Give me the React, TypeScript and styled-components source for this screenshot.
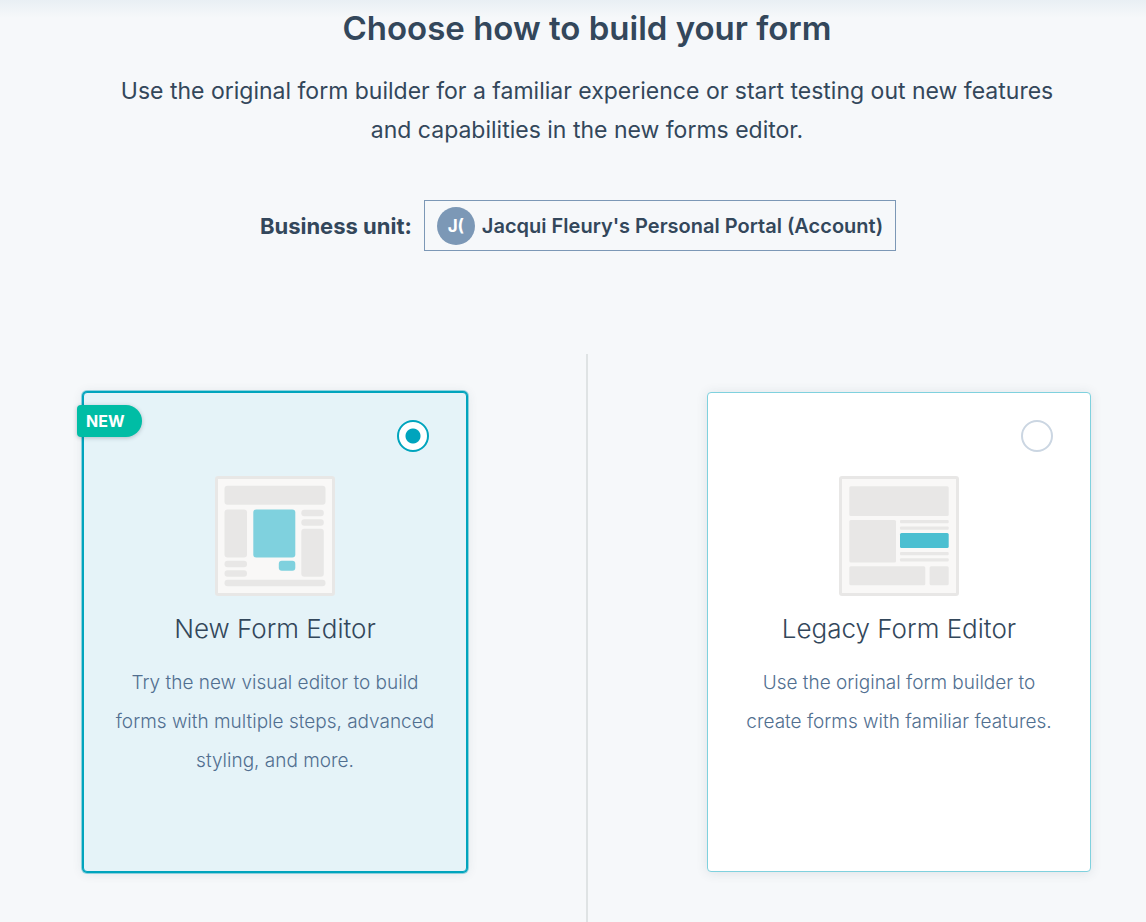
import React, { useState } from "react";
import styled, { createGlobalStyle } from "styled-components";

const GlobalStyle = createGlobalStyle`
  *, *::before, *::after { box-sizing: border-box; }
  body {
    margin: 0;
    background: #f6f8fa;
    color: #33475b;
    font-family: Inter, "Open Sans", sans-serif;
  }
`;

const Page = styled.main`
  display: flex;
  flex-direction: column;
  align-items: center;
  min-height: 100vh;
  padding: 8px 0 0 28px;
  background: linear-gradient(#e9eff4, #f6f8fa 18px);
`;

const Heading = styled.h1`
  margin: 0;
  font-size: 33px;
  line-height: 40px;
  font-weight: 600;
  text-align: center;
`;

const Intro = styled.p`
  max-width: 960px;
  margin: 24px 0 0;
  font-size: 23px;
  line-height: 39px;
  text-align: center;
`;

const UnitRow = styled.div`
  display: flex;
  align-items: center;
  gap: 12px;
  margin: 50px 18px 0 0;
`;

const UnitLabel = styled.label`
  font-size: 22px;
  line-height: 32px;
  font-weight: 700;
`;

const UnitButton = styled.button`
  display: flex;
  align-items: center;
  gap: 7px;
  padding: 6px 12px 5px;
  border: 1px solid #7c98b6;
  background: transparent;
  color: inherit;
  font-family: inherit;
  font-size: 20px;
  line-height: 36px;
  font-weight: 600;
  cursor: pointer;
`;

const Avatar = styled.span`
  width: 38px;
  height: 38px;
  border-radius: 50%;
  background: #7c98b6;
  color: #fff;
  font-size: 17px;
  line-height: 38px;
  font-weight: 700;
  text-align: center;
`;

const Choices = styled.div`
  flex: 1;
  display: grid;
  grid-template-columns: 384px 2px 384px;
  column-gap: 119px;
  margin-top: 103px;
`;

const Divider = styled.div`
  background: #dfe3e4;
`;

const Card = styled.label<{ $selected: boolean }>`
  position: relative;
  display: flex;
  flex-direction: column;
  align-items: center;
  height: 480px;
  margin: 38px 0 50px;
  padding: 27px 24px;
  border: 1px solid ${(p) => (p.$selected ? "#00a4bd" : "#7fd1de")};
  border-radius: 4px;
  background: ${(p) => (p.$selected ? "#e5f3f8" : "#fff")};
  box-shadow: ${(p) =>
    p.$selected
      ? "0 0 0 1px #00a4bd, 0 0 0 2px rgba(0, 164, 189, 0.4), 0 1px 12px rgba(45, 62, 80, 0.12)"
      : "0 1px 12px rgba(45, 62, 80, 0.12)"};
  text-align: center;
  cursor: pointer;
`;

const Radio = styled.input`
  appearance: none;
  align-self: flex-end;
  width: 32px;
  height: 32px;
  margin: 0 13px 0 0;
  border: 2px solid #cbd6e2;
  border-radius: 50%;
  background: #fff;
  cursor: pointer;

  &:checked {
    border-color: #00a4bd;
    background: radial-gradient(circle, #00a4bd 7px, #fff 8px);
  }
`;

const Badge = styled.span`
  position: absolute;
  top: 12px;
  left: -7px;
  width: 65px;
  padding-left: 9px;
  border-radius: 4px 16px 16px 4px;
  background: #00bda5;
  box-shadow: 0 1px 4px rgba(45, 62, 80, 0.3);
  color: #fff;
  font-size: 16px;
  line-height: 32px;
  font-weight: 700;
  text-align: left;
`;

const Illustration = styled.svg`
  flex: none;
  width: 120px;
  height: 120px;
  margin-top: 24px;
`;

const CardTitle = styled.span`
  margin-top: 17px;
  font-size: 26px;
  line-height: 32px;
  font-weight: 300;
`;

const CardText = styled.span`
  margin-top: 18px;
  padding: 0 4px;
  color: #516f90;
  font-size: 19px;
  line-height: 39px;
  font-weight: 300;
`;

function NewEditorArt() {
  return (
    <Illustration viewBox="0 0 120 120" aria-hidden="true">
      <rect width="120" height="120" rx="3" fill="#e8e7e6" />
      <rect x="3" y="3" width="114" height="114" fill="#f9f8f7" />
      <g fill="#e8e7e6">
        <rect x="9.5" y="9.7" width="101" height="19" rx="3" />
        <rect x="9.5" y="33.5" width="22.5" height="48" rx="3" />
        <rect x="86.3" y="33.7" width="22.5" height="6.5" rx="3" />
        <rect x="86.3" y="43.2" width="22.5" height="6.5" rx="3" />
        <rect x="86.3" y="52.7" width="22.5" height="48" rx="3" />
        <rect x="9.5" y="84.8" width="22.5" height="6.5" rx="3" />
        <rect x="9.5" y="94.3" width="22.5" height="6.5" rx="3" />
        <rect x="9.5" y="103.8" width="101" height="6.5" rx="3" />
      </g>
      <g fill="#7fd1de">
        <rect x="38.3" y="33.5" width="42" height="48" rx="3" />
        <rect x="63.8" y="84.8" width="16.5" height="10" rx="3" />
      </g>
    </Illustration>
  );
}

function LegacyEditorArt() {
  return (
    <Illustration viewBox="0 0 120 120" aria-hidden="true">
      <rect width="120" height="120" rx="3" fill="#e8e7e6" />
      <rect x="3" y="3" width="114" height="114" fill="#f9f8f7" />
      <g fill="#e8e7e6">
        <rect x="10.3" y="10.3" width="99.4" height="29.7" rx="1.5" />
        <rect x="10.3" y="44" width="46.7" height="42.6" rx="1.5" />
        <rect x="61" y="44" width="48.7" height="3.3" rx="1" />
        <rect x="61" y="50.4" width="48.7" height="3.3" rx="1" />
        <rect x="61" y="76" width="48.7" height="3.3" rx="1" />
        <rect x="61" y="82.3" width="48.7" height="3.3" rx="1" />
        <rect x="10.3" y="90.3" width="76" height="19" rx="1.5" />
        <rect x="90.6" y="90.3" width="19.1" height="19" rx="1.5" />
      </g>
      <rect x="61" y="57" width="48.7" height="15" rx="1.5" fill="#4bbfd1" />
    </Illustration>
  );
}

export default function App() {
  const [editor, setEditor] = useState("new");

  return (
    <>
      <GlobalStyle />
      <Page>
        <Heading>Choose how to build your form</Heading>
        <Intro>
          Use the original form builder for a familiar experience or start testing out new features
          and capabilities in the new forms editor.
        </Intro>
        <UnitRow>
          <UnitLabel htmlFor="business-unit">Business unit:</UnitLabel>
          <UnitButton id="business-unit" type="button">
            <Avatar>J(</Avatar>
            Jacqui Fleury's Personal Portal (Account)
          </UnitButton>
        </UnitRow>
        <Choices>
          <Card $selected={editor === "new"}>
            <Badge>NEW</Badge>
            <Radio
              type="radio"
              name="editor"
              value="new"
              checked={editor === "new"}
              onChange={() => setEditor("new")}
            />
            <NewEditorArt />
            <CardTitle>New Form Editor</CardTitle>
            <CardText>
              Try the new visual editor to build forms with multiple steps, advanced styling, and
              more.
            </CardText>
          </Card>
          <Divider />
          <Card $selected={editor === "legacy"}>
            <Radio
              type="radio"
              name="editor"
              value="legacy"
              checked={editor === "legacy"}
              onChange={() => setEditor("legacy")}
            />
            <LegacyEditorArt />
            <CardTitle>Legacy Form Editor</CardTitle>
            <CardText>
              Use the original form builder to create forms with familiar features.
            </CardText>
          </Card>
        </Choices>
      </Page>
    </>
  );
}
